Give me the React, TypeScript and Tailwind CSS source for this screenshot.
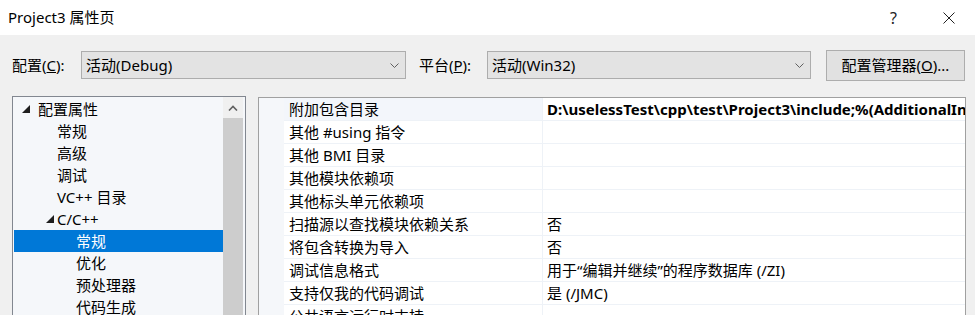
import React from "react";

const FONT = "font-['Segoe_UI','Noto_Sans','Noto_Sans_CJK_SC',sans-serif]";

type TreeItem = { label: string; level: number; expanded?: boolean; selected?: boolean };

const tree: TreeItem[] = [
    { label: "配置属性", level: 0, expanded: true },
    { label: "常规", level: 1 },
    { label: "高级", level: 1 },
    { label: "调试", level: 1 },
    { label: "VC++ 目录", level: 1 },
    { label: "C/C++", level: 1, expanded: true },
    { label: "常规", level: 2, selected: true },
    { label: "优化", level: 2 },
    { label: "预处理器", level: 2 },
    { label: "代码生成", level: 2 },
];

const rows: { name: string; value: string; bold?: boolean }[] = [
    { name: "附加包含目录", value: "D:\\uselessTest\\cpp\\test\\Project3\\include;%(AdditionalIncludeDirectories)", bold: true },
    { name: "其他 #using 指令", value: "" },
    { name: "其他 BMI 目录", value: "" },
    { name: "其他模块依赖项", value: "" },
    { name: "其他标头单元依赖项", value: "" },
    { name: "扫描源以查找模块依赖关系", value: "否" },
    { name: "将包含转换为导入", value: "否" },
    { name: "调试信息格式", value: "用于“编辑并继续”的程序数据库 (/ZI)" },
    { name: "支持仅我的代码调试", value: "是 (/JMC)" },
    { name: "公共语言运行时支持", value: "" },
];

function Chevron() {
    return (
        <svg width="9" height="5" viewBox="0 0 9 5" className="shrink-0">
            <path d="M0.5 0.5 L4.5 4.5 L8.5 0.5" fill="none" stroke="#606060" strokeWidth="1" />
        </svg>
    );
}

function Select({ text, width }: { text: string; width: string }) {
    return (
        <div className={`${width} h-[28px] flex items-center justify-between bg-[#e3e3e3] border border-[#adadad] pl-[4px] pr-[6px]`}>
            <span className="text-[15px] leading-none">{text}</span>
            <Chevron />
        </div>
    );
}

function Triangle() {
    return (
        <svg width="8" height="8" viewBox="0 0 8 8" className="shrink-0">
            <polygon points="8,0 8,8 0,8" fill="#1e1e1e" />
        </svg>
    );
}

export default function App() {
    return (
        <div className={`w-[975px] h-[315px] overflow-hidden bg-[#f0f0f0] text-black ${FONT}`}>
            {/* Title bar */}
            <div className="h-[35px] bg-white flex items-center justify-between pl-[8px] pr-[20px]">
                <span className="text-[15px]">Project3 属性页</span>
                <div className="flex items-center gap-[46px]">
                    <span className="text-[16px] text-[#222]">?</span>
                    <svg width="12" height="12" viewBox="0 0 12 12">
                        <path d="M0.5 0.5 L11.5 11.5 M11.5 0.5 L0.5 11.5" stroke="#222" strokeWidth="1" />
                    </svg>
                </div>
            </div>

            {/* Toolbar */}
            <div className="h-[60px] flex items-center pl-[12px] text-[15px]">
                <span className="w-[69px]">
                    配置(<u>C</u>):
                </span>
                <Select text="活动(Debug)" width="w-[325px]" />
                <span className="ml-[13px] w-[68px]">
                    平台(<u>P</u>):
                </span>
                <Select text="活动(Win32)" width="w-[324px]" />
                <button className="ml-[15px] w-[139px] h-[31px] bg-[#e1e1e1] border border-[#adadad] text-[15px] flex items-center justify-center">
                    配置管理器(<u>O</u>)...
                </button>
            </div>

            {/* Panels */}
            <div className="flex pl-[12px] gap-[12px]">
                {/* Tree */}
                <div className="mt-[1px] w-[234px] h-[230px] border border-[#828790] bg-[#f5f7fa] flex pr-[2px]">
                    <div className="flex-1 pt-[1px] pl-[1px] text-[15px]">
                        {tree.map((item, i) => (
                            <div
                                key={i}
                                className={`h-[22px] flex items-center ${item.selected ? "bg-[#0078d7] text-white" : ""}`}
                            >
                                <div
                                    className={
                                        item.level === 0 ? "w-[24px]" : item.level === 1 ? "w-[43px]" : "w-[62px]"
                                    }
                                >
                                    {item.expanded && (
                                        <div className={item.level === 0 ? "pl-[8px]" : "pl-[32px]"}>
                                            <Triangle />
                                        </div>
                                    )}
                                </div>
                                <span className="leading-none">{item.label}</span>
                            </div>
                        ))}
                    </div>
                    <div className="w-[20px] flex flex-col bg-[#f0f0f0]">
                        <div className="h-[21px] flex items-center justify-center">
                            <svg width="10" height="6" viewBox="0 0 10 6">
                                <path d="M1 5.5 L5 1.5 L9 5.5" fill="none" stroke="#606060" strokeWidth="1.6" />
                            </svg>
                        </div>
                        <div className="flex-1 bg-[#cdcdcd]" />
                    </div>
                </div>

                {/* Property grid */}
                <div className="mt-[2px] w-[708px] h-[230px] border border-[#a0a0a0] bg-white flex">
                    <div className="w-[25px] shrink-0 bg-[#f5f7fa]" />
                    <div className="flex-1 min-w-0 flex flex-col text-[15px]">
                        {rows.map((row, i) => (
                            <div key={i} className="h-[23px] shrink-0 flex border-b border-[#eef2f7]">
                                <div
                                    className={`w-[258px] shrink-0 flex items-center pl-[5px] ${i === 0 ? "bg-[#f3f6fb]" : ""}`}
                                >
                                    <span className="leading-none whitespace-nowrap">{row.name}</span>
                                </div>
                                <div className="flex-1 min-w-0 overflow-hidden flex items-center pl-[4px] border-l border-[#eef2f7]">
                                    <span className={`leading-none whitespace-nowrap ${row.bold ? "font-bold" : ""}`}>
                                        {row.value}
                                    </span>
                                </div>
                            </div>
                        ))}
                    </div>
                </div>
            </div>
        </div>
    );
}
